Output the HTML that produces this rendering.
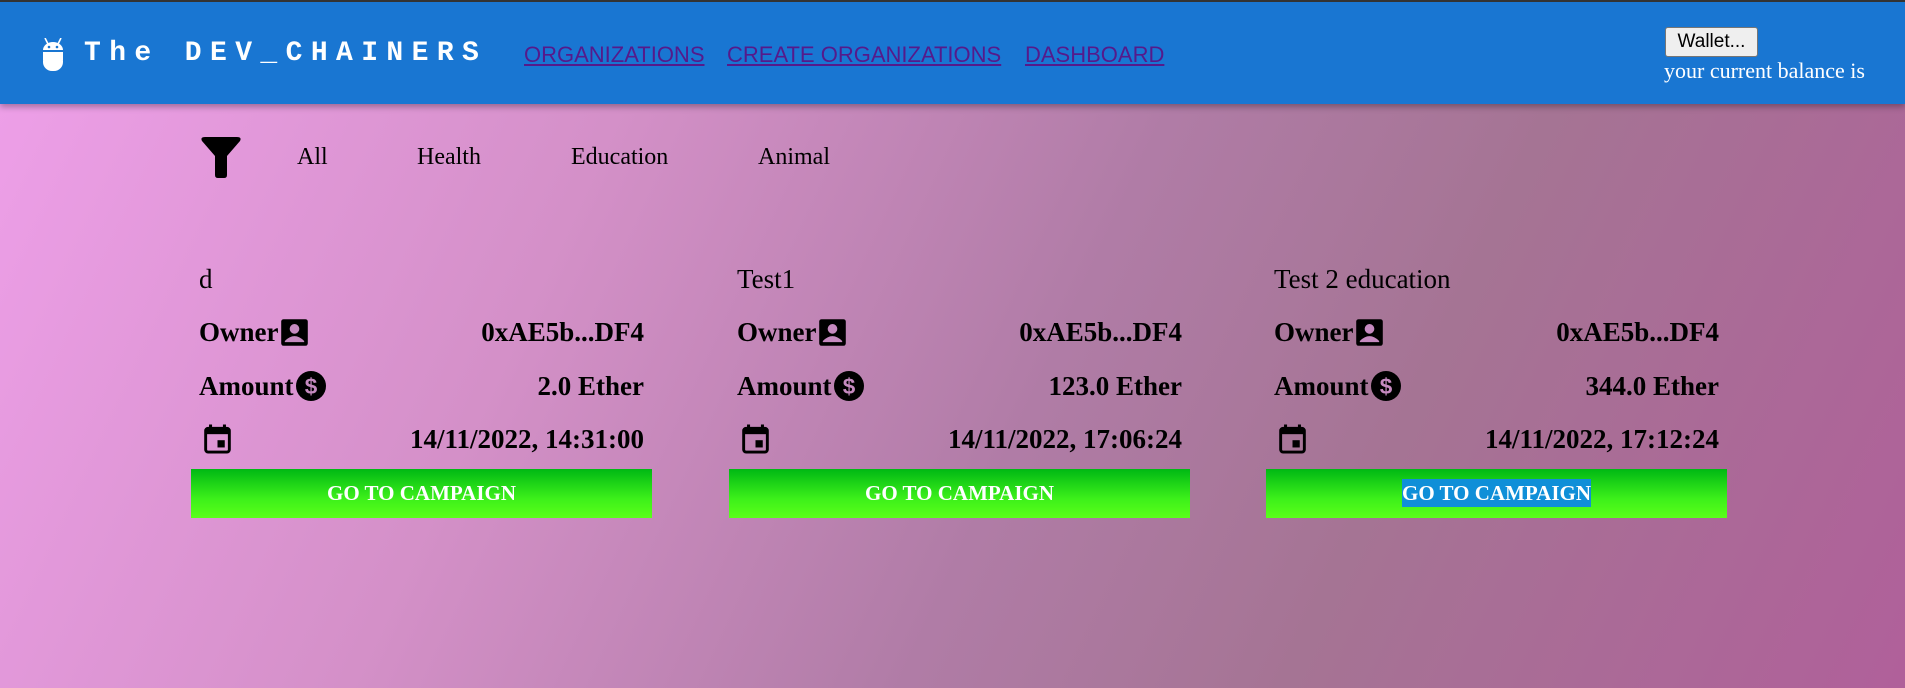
<!DOCTYPE html>
<html><head><meta charset="utf-8"><style>
*{margin:0;padding:0;box-sizing:border-box}
html,body{width:1905px;height:688px;overflow:hidden}
body{background:linear-gradient(115deg,#efa0ea 0%,#d490c8 30%,#b07ca6 55%,#a57494 72%,#b0609a 100%);font-family:"Liberation Serif",serif;position:relative;color:#000}
.hdr{position:absolute;left:0;top:0;width:1905px;height:104px;background:#1976d2;border-top:2px solid #333;box-shadow:0 3px 6px rgba(0,0,0,.3)}
.logo{position:absolute;left:42px;top:36px}
.title{position:absolute;left:84px;top:34px;font-family:"Liberation Mono",monospace;font-weight:bold;font-size:28px;letter-spacing:8.4px;color:#fff;line-height:36px}
.nav a{position:absolute;top:40px;font-family:"Liberation Sans",sans-serif;font-size:22px;color:#551a8b;text-decoration:underline;line-height:26px}
.wbtn{position:absolute;left:1665px;top:25px;width:93px;height:30px;background:#efefef;border:1px solid #767676;border-radius:3px;font-family:"Liberation Sans",sans-serif;font-size:19px;line-height:28px;text-align:center}
.bal{position:absolute;left:1664px;top:55px;color:#fff;font-size:22px;line-height:27px}
.cat{position:absolute;top:143px;font-size:24px;line-height:28px}
.card{position:absolute;top:0;width:461px}
.t{position:absolute;left:8px;top:264px;font-size:27px;line-height:30px}
.row{position:absolute;left:8px;width:445px;font-weight:bold;font-size:27px;line-height:30px;display:flex;justify-content:space-between;align-items:center}
.row span{display:flex;align-items:center}
.btn{position:absolute;left:0;top:469px;width:461px;height:49px;background:linear-gradient(#00b814,#3cf01a 60%,#5aff1a);color:#fff;font-weight:bold;font-size:21px;text-align:center;line-height:48px}
.sel{background:#0f8fd8;padding:2px 0}
</style></head><body>
<div class="hdr">
<svg class="logo" width="22" height="33" viewBox="0 0 22 33"><path d="M3 0 L6 6 M19 0 L16 6" stroke="#fff" stroke-width="1.6"/><path d="M1 12 A10 8 0 0 1 21 12 Z" fill="#fff"/><rect x="1" y="14" width="20" height="19" rx="9" fill="#fff"/><rect x="1" y="14" width="20" height="8" fill="#fff"/><circle cx="7" cy="9" r="1.3" fill="#1976d2"/><circle cx="15" cy="9" r="1.3" fill="#1976d2"/></svg>
<div class="title">The DEV_CHAINERS</div>
<div class="nav"><a style="left:524px">ORGANIZATIONS</a><a style="left:727px">CREATE ORGANIZATIONS</a><a style="left:1025px">DASHBOARD</a></div>
<div class="wbtn">Wallet...</div>
<div class="bal">your current balance is</div>
</div>
<svg style="position:absolute;left:200px;top:137px" width="42" height="41" viewBox="0 0 42 41"><path d="M2 4 Q0 0 5 0 H37 Q42 0 40 4 L27 19 V38 Q27 41 24 41 H18 Q15 41 15 38 V19 Z" fill="#000"/></svg>
<div class="cat" style="left:297px">All</div>
<div class="cat" style="left:417px">Health</div>
<div class="cat" style="left:571px">Education</div>
<div class="cat" style="left:758px">Animal</div>

<svg width="0" height="0" style="position:absolute"><defs>
<symbol id="own" viewBox="0 0 24 24"><rect x="1" y="1" width="22" height="22" rx="2" fill="#000"/><circle cx="12" cy="9" r="4" fill="#c68ac0"/><path d="M4 19 Q12 11 20 19 V20 H4Z" fill="#c68ac0"/></symbol>
<symbol id="dol" viewBox="0 0 24 24"><circle cx="12" cy="12" r="12" fill="#000"/><text x="12" y="18.5" font-family="Liberation Sans" font-weight="bold" font-size="18" fill="#c68ac0" text-anchor="middle">$</text></symbol>
<symbol id="cal" viewBox="0 0 24 24"><rect x="5" y="0" width="2.5" height="5" fill="#000"/><rect x="16.5" y="0" width="2.5" height="5" fill="#000"/><rect x="2.2" y="3.2" width="19.6" height="19.6" rx="2" fill="none" stroke="#000" stroke-width="2.4"/><rect x="2" y="3" width="20" height="5" fill="#000"/><rect x="12" y="13" width="6" height="6" fill="#000"/></symbol>
</defs></svg>

<div class="card" style="left:191px">
<div class="t">d</div>
<div class="row" style="top:317px"><span>Owner<svg width="29" height="29" style="margin-left:2px"><use href="#own"/></svg></span><span>0xAE5b...DF4</span></div>
<div class="row" style="top:371px"><span>Amount<svg width="30" height="30" style="margin-left:2px"><use href="#dol"/></svg></span><span>2.0 Ether</span></div>
<div class="row" style="top:424px"><span><svg width="29" height="30" style="margin-left:4px"><use href="#cal"/></svg></span><span>14/11/2022, 14:31:00</span></div>
<div class="btn">GO TO CAMPAIGN</div>
</div>
<div class="card" style="left:729px">
<div class="t">Test1</div>
<div class="row" style="top:317px"><span>Owner<svg width="29" height="29" style="margin-left:2px"><use href="#own"/></svg></span><span>0xAE5b...DF4</span></div>
<div class="row" style="top:371px"><span>Amount<svg width="30" height="30" style="margin-left:2px"><use href="#dol"/></svg></span><span>123.0 Ether</span></div>
<div class="row" style="top:424px"><span><svg width="29" height="30" style="margin-left:4px"><use href="#cal"/></svg></span><span>14/11/2022, 17:06:24</span></div>
<div class="btn">GO TO CAMPAIGN</div>
</div>
<div class="card" style="left:1266px">
<div class="t">Test 2 education</div>
<div class="row" style="top:317px"><span>Owner<svg width="29" height="29" style="margin-left:2px"><use href="#own"/></svg></span><span>0xAE5b...DF4</span></div>
<div class="row" style="top:371px"><span>Amount<svg width="30" height="30" style="margin-left:2px"><use href="#dol"/></svg></span><span>344.0 Ether</span></div>
<div class="row" style="top:424px"><span><svg width="29" height="30" style="margin-left:4px"><use href="#cal"/></svg></span><span>14/11/2022, 17:12:24</span></div>
<div class="btn"><span class="sel">GO TO CAMPAIGN</span></div>
</div>
</body></html>
